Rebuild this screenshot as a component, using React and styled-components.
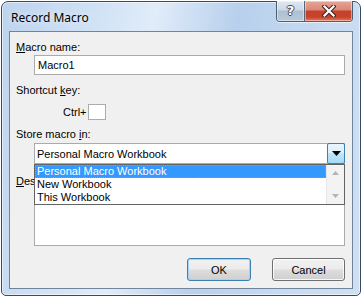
import React from 'react';
import styled, { createGlobalStyle } from 'styled-components';

const GlobalStyle = createGlobalStyle`
  html, body { margin: 0; padding: 0; background: #ffffff; }
  body { font-family: "Liberation Sans", Arial, sans-serif; font-size: 11px; color: #000; }
`;

const Window = styled.div`
  box-sizing: border-box;
  width: 360px;
  height: 295px;
  margin: 1px 0 0 1px;
  border: 1px solid #3b4a5e;
  border-radius: 7px 7px 5px 5px;
  padding: 0 7px 6px 7px;
  display: flex;
  flex-direction: column;
  background: linear-gradient(100deg, #bdd4ee 0%, #cfe1f5 22%, #e0ecf9 38%, #b8d0ec 58%, #c6daf1 80%, #cfe0f3 100%);
  box-shadow: inset 0 0 0 1px rgba(255, 255, 255, 0.55);
`;

const TitleBar = styled.div`
  height: 29px;
  display: flex;
  justify-content: space-between;
  align-items: flex-start;
`;

const Title = styled.div`
  font-family: "Noto Sans", "Open Sans", sans-serif;
  font-size: 12px;
  line-height: 15px;
  margin: 8px 0 0 2px;
  color: #000;
  text-shadow: 0 0 6px rgba(255, 255, 255, 0.9);
`;

const CaptionButtons = styled.div`
  display: flex;
  margin-top: -1px;
  height: 20px;
  border: 1px solid #4f5d70;
  border-top: none;
  border-radius: 0 0 4px 4px;
  overflow: hidden;
  box-shadow: 0 1px 0 rgba(255, 255, 255, 0.6);
`;

const CaptionButton = styled.div`
  width: ${p => p.$w}px;
  display: flex;
  align-items: center;
  justify-content: center;
  box-shadow: inset 0 0 0 1px rgba(255, 255, 255, 0.45);
  background: ${p => p.$close
    ? 'linear-gradient(180deg, #e8a596 0%, #d98877 45%, #c4412b 50%, #c9422b 80%, #e2795c 100%)'
    : 'linear-gradient(180deg, #dfe8f2 0%, #cbd8e6 45%, #aebfd2 50%, #b8c9db 100%)'};
  & + & { border-left: 1px solid #5a6577; }
`;

const HelpGlyph = styled.span`
  font-family: "DejaVu Sans", sans-serif;
  font-weight: bold;
  font-size: 13px;
  line-height: 14px;
  color: #ffffff;
  text-shadow: 1px 0 0 #3e4c5e, -1px 0 0 #3e4c5e, 0 1px 0 #3e4c5e, 0 -1px 0 #3e4c5e;
`;

const Client = styled.div`
  flex: 1;
  background: #f0f0f0;
  border: 1px solid #72849b;
  padding: 9px 7px 0 6px;
  display: flex;
  flex-direction: column;
`;

const Label = styled.div`
  line-height: 13px;
  margin-top: ${p => p.$mt || 0}px;
  height: 13px;
  white-space: nowrap;
  width: ${p => (p.$clip ? `${p.$clip}px` : 'auto')};
  overflow: hidden;
`;

const U = styled.span`
  text-decoration: underline;
`;

const Field = styled.div`
  box-sizing: border-box;
  margin-left: 18px;
  margin-top: ${p => p.$mt || 0}px;
  height: ${p => p.$h}px;
  background: #ffffff;
  border: 1px solid #ababab;
  padding: 0 3px;
  display: flex;
  align-items: center;
`;

const KeyRow = styled.div`
  display: flex;
  align-items: center;
  margin-top: 7px;
  margin-left: 47px;
  height: 16px;
  gap: 1px;
`;

const KeyBox = styled.div`
  box-sizing: border-box;
  width: 18px;
  height: 16px;
  background: #ffffff;
  border: 1px solid #ababab;
`;

const ComboWrap = styled.div`
  position: relative;
  margin-left: 18px;
  margin-top: 2px;
`;

const Combo = styled.div`
  box-sizing: border-box;
  height: 21px;
  background: #ffffff;
  border: 1px solid #ababab;
  display: flex;
  align-items: center;
  justify-content: space-between;
  padding-left: 2px;
`;

const DropButton = styled.div`
  box-sizing: border-box;
  width: 18px;
  height: 21px;
  margin: -1px -1px -1px 0;
  border: 1px solid #3c7fb1;
  border-radius: 2px;
  background: linear-gradient(180deg, #eaf6fd 0%, #d9f0fc 45%, #bee6fd 50%, #a7d9f5 100%);
  display: flex;
  align-items: center;
  justify-content: center;
`;

const List = styled.div`
  position: absolute;
  left: 0;
  right: 0;
  top: 100%;
  box-sizing: border-box;
  height: 41px;
  background: #ffffff;
  border: 1px solid #646464;
  display: flex;
  z-index: 2;
`;

const Options = styled.div`
  flex: 1;
  display: flex;
  flex-direction: column;
`;

const Option = styled.div`
  box-sizing: border-box;
  height: 13px;
  line-height: 11px;
  padding-left: 1px;
  white-space: nowrap;
  background: ${p => (p.$selected ? '#3399ff' : 'transparent')};
  color: ${p => (p.$selected ? '#ffffff' : '#000000')};
  border: 1px ${p => (p.$selected ? 'dotted #e08a3c' : 'solid transparent')};
`;

const ScrollBar = styled.div`
  width: 17px;
  background: #f3f3f3;
  border-left: 1px solid #e6e6e6;
  display: flex;
  flex-direction: column;
  justify-content: space-between;
  align-items: center;
  padding: 6px 0 6px;
`;

const Area = styled.div`
  box-sizing: border-box;
  margin-left: 18px;
  margin-top: 2px;
  height: 56px;
  background: #ffffff;
  border: 1px solid #ababab;
`;

const ButtonRow = styled.div`
  display: flex;
  justify-content: flex-end;
  gap: 21px;
  margin-top: 12px;
`;

const Button = styled.div`
  box-sizing: border-box;
  width: ${p => p.$w}px;
  height: 23px;
  border: 1px solid ${p => (p.$default ? '#3c7fb1' : '#707070')};
  border-radius: 3px;
  background: linear-gradient(180deg, #f2f2f2 0%, #ebebeb 48%, #dddddd 52%, #cfcfcf 100%);
  box-shadow: inset 0 0 0 1px ${p => (p.$default ? '#9fd6f5' : 'rgba(255,255,255,0.8)')};
  display: flex;
  align-items: center;
  justify-content: center;
`;

const Arrow = ({ dir = 'down', color = '#000', w = 7, h = 4 }) => (
  <svg width={w} height={h} viewBox={`0 0 ${w} ${h}`}>
    {dir === 'down'
      ? <path d={`M0 0H${w}L${w / 2} ${h}Z`} fill={color} />
      : <path d={`M0 ${h}H${w}L${w / 2} 0Z`} fill={color} />}
  </svg>
);

const CloseGlyph = () => (
  <svg width="14" height="12" viewBox="0 0 14 12">
    <path d="M2.5 1.5L11.5 10.5M11.5 1.5L2.5 10.5" stroke="#3a2320" strokeWidth="4.2" strokeLinecap="square" />
    <path d="M2.5 1.5L11.5 10.5M11.5 1.5L2.5 10.5" stroke="#ffffff" strokeWidth="2.2" strokeLinecap="square" />
  </svg>
);

export default function App() {
  return (
    <>
      <GlobalStyle />
      <Window>
        <TitleBar>
          <Title>Record Macro</Title>
          <CaptionButtons>
            <CaptionButton $w={27}><HelpGlyph>?</HelpGlyph></CaptionButton>
            <CaptionButton $w={47} $close><CloseGlyph /></CaptionButton>
          </CaptionButtons>
        </TitleBar>
        <Client>
          <Label><U>M</U>acro name:</Label>
          <Field $mt={1} $h={20}>Macro1</Field>
          <Label $mt={9}>Shortcut <U>k</U>ey:</Label>
          <KeyRow>
            <span>Ctrl+</span>
            <KeyBox />
          </KeyRow>
          <Label $mt={8}>Store macro <U>i</U>n:</Label>
          <ComboWrap>
            <Combo>
              <span>Personal Macro Workbook</span>
              <DropButton><Arrow w={9} h={5} /></DropButton>
            </Combo>
            <List>
              <Options>
                <Option $selected>Personal Macro Workbook</Option>
                <Option>New Workbook</Option>
                <Option>This Workbook</Option>
              </Options>
              <ScrollBar>
                <Arrow dir="up" color="#b4b4b4" />
                <Arrow color="#b4b4b4" />
              </ScrollBar>
            </List>
          </ComboWrap>
          <Label $mt={11} $clip={18}><U>D</U>escription:</Label>
          <Area />
          <ButtonRow>
            <Button $w={64} $default>OK</Button>
            <Button $w={73}>Cancel</Button>
          </ButtonRow>
        </Client>
      </Window>
    </>
  );
}
